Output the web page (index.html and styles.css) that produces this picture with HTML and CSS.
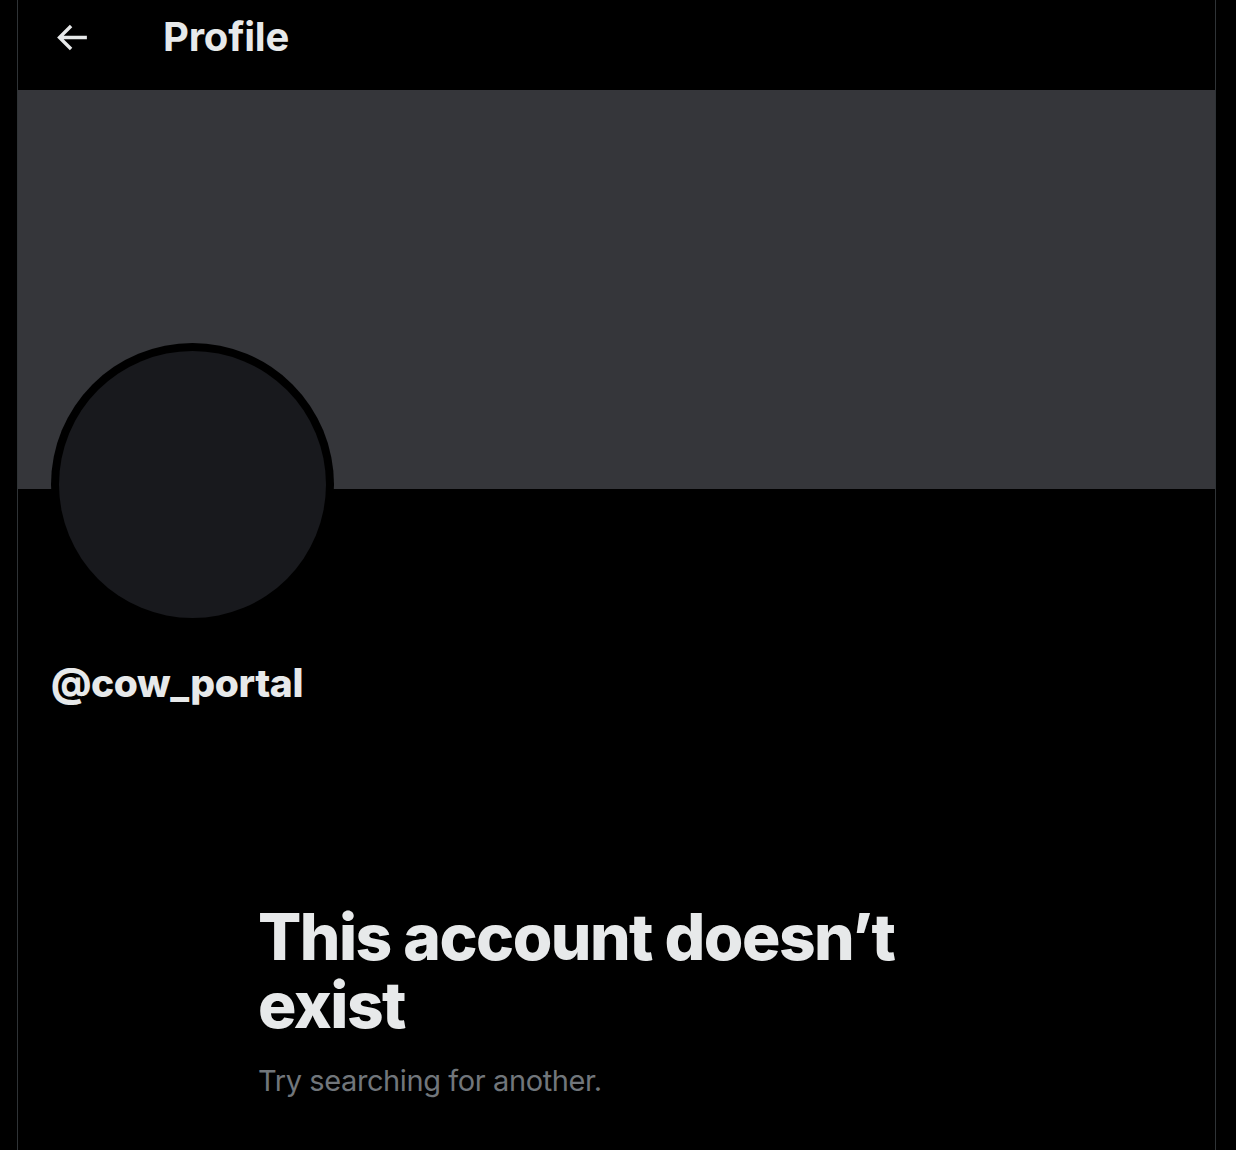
FILE: index.html
```html
<!DOCTYPE html>
<html lang="en">
<head>
<meta charset="utf-8">
<title>Profile</title>
<link rel="stylesheet" href="styles.css">
</head>
<body>
<div class="page">
  <main class="column">
    <header class="topbar">
      <div class="back">
        <svg viewBox="0 0 24 24" width="41" height="41" aria-hidden="true"><path fill="#e7e9ea" d="M7.414 13l5.043 5.04-1.414 1.42L3.586 12l7.457-7.46 1.414 1.42L7.414 11H21v2H7.414z"/></svg>
      </div>
      <h1 class="title">Profile</h1>
    </header>
    <div class="banner"></div>
    <section class="info">
      <div class="avatar"><div class="avatar-inner"></div></div>
      <div class="handle">@cow_portal</div>
    </section>
    <section class="empty">
      <div class="empty-box">
        <h2 class="empty-title">This account doesn’t exist</h2>
        <p class="empty-sub">Try searching for another.</p>
      </div>
    </section>
  </main>
</div>
</body>
</html>
```

FILE: styles.css
```css
html, body {
  margin: 0;
  padding: 0;
  background: #000;
}
body {
  font-family: Inter, "Noto Sans", "Liberation Sans", sans-serif;
  color: #e7e9ea;
}
.page {
  display: flex;
  min-height: 1150px;
}
.column {
  margin-left: 17px;
  width: 1197px;
  border-left: 1px solid #2f3336;
  border-right: 1px solid #2f3336;
  min-height: 1150px;
}
.topbar {
  height: 90px;
  box-sizing: border-box;
  display: flex;
  align-items: center;
  padding: 0 0 16px 33px;
  gap: 71px;
}
.back {
  width: 41px;
  height: 41px;
  display: flex;
}
.title {
  margin: 0;
  font-size: 40px;
  font-weight: 700;
  line-height: 46px;
  letter-spacing: -0.2px;
}
.banner {
  height: 399px;
  background: #35363a;
}
.info {
  padding: 0 33px;
}
.avatar {
  width: 283px;
  height: 283px;
  margin-top: -146px;
  box-sizing: border-box;
  border-radius: 50%;
  background: #000;
  padding: 8px;
}
.avatar-inner {
  width: 100%;
  height: 100%;
  border-radius: 50%;
  background: #18191d;
}
.handle {
  margin-top: 33px;
  font-size: 39px;
  font-weight: 800;
  line-height: 48px;
  letter-spacing: -0.4px;
}
.empty {
  padding-left: 240px;
  margin-top: 196px;
}
.empty-box {
  max-width: 680px;
}
.empty-title {
  margin: 0;
  font-size: 64px;
  font-weight: 800;
  line-height: 68px;
  letter-spacing: -1.5px;
}
.empty-sub {
  margin: 24px 0 0;
  font-size: 29px;
  line-height: 36px;
  color: #71767b;
  letter-spacing: -0.4px;
}
```
